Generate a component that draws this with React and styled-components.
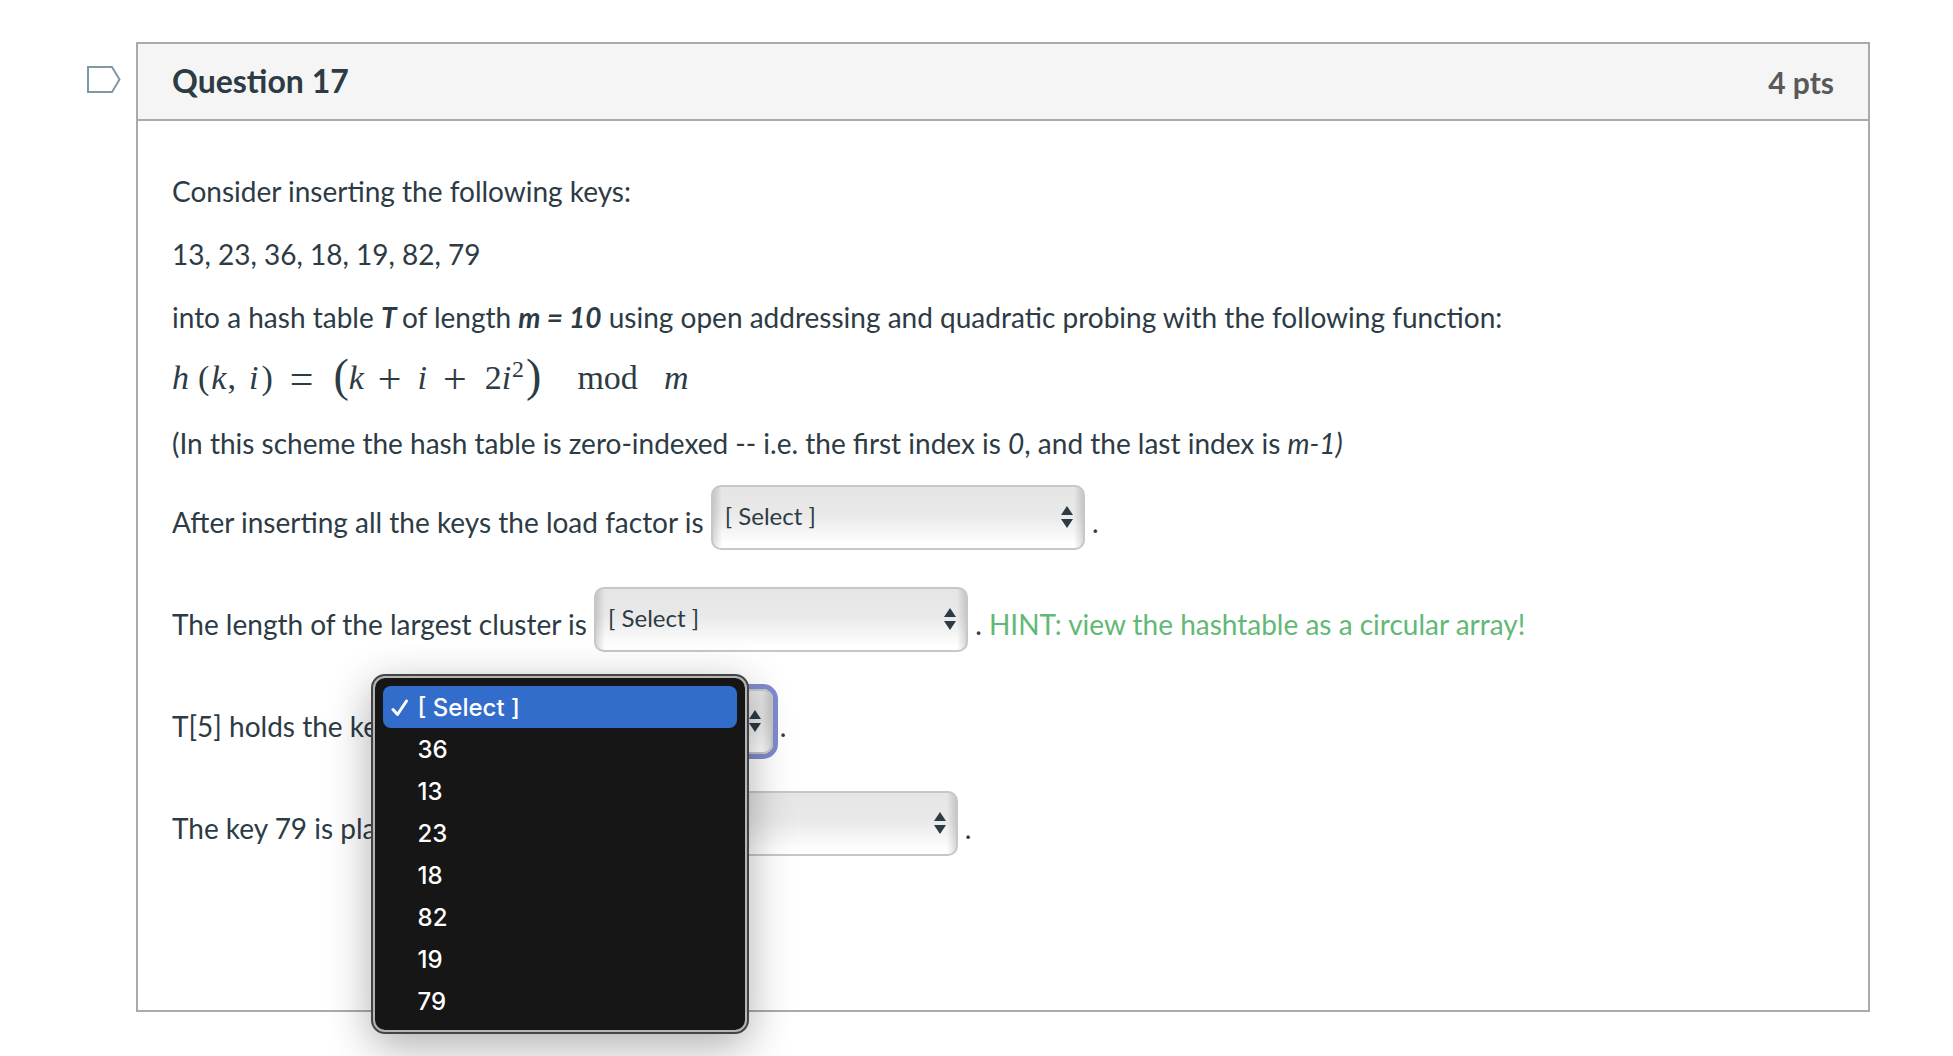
import React, { useState } from "react";
import styled, { createGlobalStyle } from "styled-components";

const GlobalStyle = createGlobalStyle`
  * {
    box-sizing: border-box;
  }

  body {
    margin: 0;
    background: #fff;
    color: #2d3b45;
    font-family: Lato, "Liberation Sans", sans-serif;
    font-size: 28px;
    line-height: 42px;
  }
`;

const Page = styled.main`
  display: flex;
  align-items: flex-start;
  padding: 42px 83px 44px 86px;
`;

const FlagButton = styled.button`
  display: flex;
  flex: none;
  width: 50px;
  padding: 23px 0 0;
  border: 0;
  background: none;
  cursor: pointer;
`;

const QuestionCard = styled.article`
  flex: 1;
  min-width: 0;
  border: 2px solid #aaa;
`;

const QuestionHeader = styled.header`
  display: flex;
  align-items: center;
  justify-content: space-between;
  height: 77px;
  padding: 0 34px;
  border-bottom: 2px solid #aaa;
  background: #f5f5f5;
`;

const QuestionName = styled.h2`
  margin: 0;
  padding-bottom: 2px;
  font-size: 32px;
  font-weight: 700;
`;

const Points = styled.div`
  color: #595959;
  font-size: 30px;
  font-weight: 700;
`;

const QuestionBody = styled.div`
  display: flex;
  flex-direction: column;
  gap: 21px;
  padding: 49px 34px 138px;
`;

const Text = styled.p`
  margin: 0;
`;

const Formula = styled.div`
  height: 42px;
  font-family: "Liberation Serif", serif;
  font-size: 34px;
  line-height: 38px;
  white-space: nowrap;
`;

const Variable = styled.i`
  margin-right: ${(props) => props.$after || 0}px;
`;

const Symbol = styled.span`
  margin-right: ${(props) => props.$after || 0}px;
`;

const Operator = styled(Symbol)`
  font-size: 42px;
  line-height: 0;
  vertical-align: -4px;
`;

const BigParen = styled(Symbol)`
  font-size: 46px;
  line-height: 0;
  vertical-align: -2px;
`;

const Power = styled.sup`
  margin-right: 2px;
  font-size: 24px;
  line-height: 0;
  vertical-align: 12px;
`;

const Hint = styled.span`
  color: #62b875;
`;

const Picker = styled.span`
  position: relative;
  display: inline-flex;
  margin-bottom: 16px;
  vertical-align: middle;
`;

const arrows = `url("data:image/svg+xml,%3Csvg xmlns='http://www.w3.org/2000/svg' width='12' height='22'%3E%3Cpath d='M6 0l6 9H0zM0 13h12l-6 9z' fill='%232d3b45'/%3E%3C/svg%3E")`;

const Select = styled.select`
  appearance: none;
  width: 374px;
  height: 65px;
  padding: 0 40px 4px 12px;
  border: 2px solid #c7c7c7;
  border-radius: 10px;
  outline: none;
  background:
    ${arrows} no-repeat right 10px top 19px,
    linear-gradient(to right, rgba(0, 0, 0, 0.14), rgba(0, 0, 0, 0) 9px),
    linear-gradient(to left, rgba(0, 0, 0, 0.14), rgba(0, 0, 0, 0) 9px),
    linear-gradient(#e5e5e5, #e9e9e9 45%, #fff 95%);
  box-shadow: ${(props) => (props.$open ? "0 0 0 5px #7f8bd0" : "none")};
  color: #2d3b45;
  font-family: inherit;
  font-size: 24px;
`;

const Menu = styled.ul`
  position: absolute;
  z-index: 1;
  top: -15px;
  left: -28px;
  width: 378px;
  margin: 0;
  padding: 8px;
  border: 4px solid #444;
  border-radius: 14px;
  outline: 2px solid #b5b5b5;
  outline-offset: -4px;
  background: #161616;
  box-shadow: 0 12px 44px rgba(0, 0, 0, 0.32);
  list-style: none;
`;

const MenuItem = styled.li`
  display: flex;
  align-items: center;
  height: 42px;
  padding: 2px 0 0 8px;
  border-radius: 8px;
  background: ${(props) => (props.$active ? "#326dcb" : "transparent")};
  color: #fff;
  font-family: Inter, sans-serif;
  font-size: 24px;
  font-weight: 500;
  cursor: default;
`;

const CheckSlot = styled.span`
  display: flex;
  width: 27px;
`;

const KEYS = ["36", "13", "23", "18", "82", "19", "79"];
const PLACEHOLDER = "[ Select ]";

function Blank({ id, open, children }) {
  return (
    <Picker>
      <Select id={id} $open={open}>
        <option>{PLACEHOLDER}</option>
      </Select>
      {children}
    </Picker>
  );
}

function KeyMenu() {
  const [active, setActive] = useState(PLACEHOLDER);

  return (
    <Menu role="listbox" aria-label="Key in T[5]">
      {[PLACEHOLDER, ...KEYS].map((item) => (
        <MenuItem
          key={item}
          role="option"
          aria-selected={item === active}
          $active={item === active}
          onClick={() => setActive(item)}
        >
          <CheckSlot>
            {item === active && (
              <svg width="18" height="18" viewBox="0 0 18 18" fill="none" stroke="#fff" strokeWidth="3" strokeLinecap="round" strokeLinejoin="round">
                <path d="M2 10.500l4.500 5L15.500 2" />
              </svg>
            )}
          </CheckSlot>
          {item}
        </MenuItem>
      ))}
    </Menu>
  );
}

function App() {
  return (
    <>
      <GlobalStyle />
      <Page>
        <FlagButton aria-label="Flag question 17">
          <svg width="36" height="30" viewBox="0 0 36 30" fill="none" stroke="#7f98a8" strokeWidth="2">
            <path d="M2 2H26l7.500 12.500L26 27H2z" />
          </svg>
        </FlagButton>

        <QuestionCard>
          <QuestionHeader>
            <QuestionName>Question 17</QuestionName>
            <Points>4 pts</Points>
          </QuestionHeader>

          <QuestionBody>
            <Text>Consider inserting the following keys:</Text>
            <Text>13, 23, 36, 18, 19, 82, 79</Text>
            <Text>
              into a hash table <b><i>T </i></b>of length <b><i>m = 10</i></b> using open
              addressing and quadratic probing with the following function:
            </Text>

            <Formula>
              <Variable $after={9}>h</Variable>
              <Symbol $after={2}>(</Symbol>
              <Variable $after={1}>k</Variable>
              <Symbol $after={13}>,</Symbol>
              <Variable $after={3}>i</Variable>
              <Symbol $after={17}>)</Symbol>
              <Operator $after={20}>=</Operator>
              <BigParen>(</BigParen>
              <Variable $after={14}>k</Variable>
              <Operator $after={16}>+</Operator>
              <Variable $after={16}>i</Variable>
              <Operator $after={18}>+</Operator>
              <Symbol>2</Symbol>
              <Variable $after={1}>i</Variable>
              <Power>2</Power>
              <BigParen $after={36}>)</BigParen>
              <Symbol $after={26}>mod</Symbol>
              <Variable>m</Variable>
            </Formula>

            <Text>
              (In this scheme the hash table is zero-indexed -- i.e. the first index is <i>0</i>,
              and the last index is <i>m-1)</i>
            </Text>

            <Text>
              <label htmlFor="load">After inserting all the keys the load factor is</label>{" "}
              <Blank id="load" /> .
            </Text>
            <Text>
              <label htmlFor="cluster">The length of the largest cluster is</label>{" "}
              <Blank id="cluster" /> . <Hint>HINT: view the hashtable as a circular array!</Hint>
            </Text>
            <Text>
              <label htmlFor="slot">T[5] holds the key</label>{" "}
              <Blank id="slot" open>
                <KeyMenu />
              </Blank>{" "}
              .
            </Text>
            <Text>
              <label htmlFor="index">The key 79 is placed at this index</label>{" "}
              <Blank id="index" /> .
            </Text>
          </QuestionBody>
        </QuestionCard>
      </Page>
    </>
  );
}

export default App;
